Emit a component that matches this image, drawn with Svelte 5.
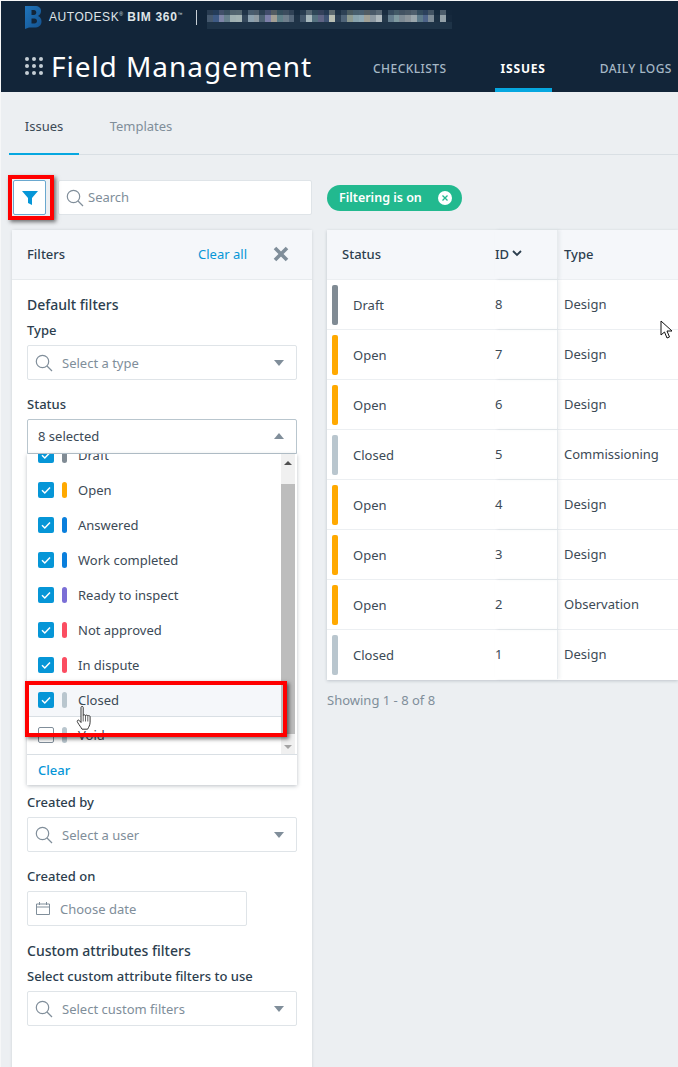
<script>
  // mosaic colours for the blurred project name
  const mosaic = [
    '#46596e','#3e5a84','#7d84a6','#67808c','#9fb0b2','#a3b3b4','#33475b','#8ba0ae','#8f9ba3','#4c6172','#7c7fa8','#a39f95','#5f8088','#6f7f8c','#55677a','#1f3347','#44586c','#a7b8bd','#54717f','#5f6485',
    '#3e5272','#b9bfb4','#2c4055','#4f6478','#8d9a90','#88a3ad','#8fa9b4','#a1a196','#8d99a3','#aeb8be','#24384b','#647d8d','#7f9aa0','#7d8a94','#8b949b','#9aa6ac','#5d7a8a','#4d6388','#7d8b96','#1d3144','#93a0a8','#16293d'
  ];

  const statuses = [
    { label: 'Draft', color: '#808b94', checked: true },
    { label: 'Open', color: '#ffa900', checked: true },
    { label: 'Answered', color: '#0a7fdc', checked: true },
    { label: 'Work completed', color: '#0a7fdc', checked: true },
    { label: 'Ready to inspect', color: '#7b6fd6', checked: true },
    { label: 'Not approved', color: '#fb4d61', checked: true },
    { label: 'In dispute', color: '#fb4d61', checked: true },
    { label: 'Closed', color: '#b9c6ce', checked: true, hover: true },
    { label: 'Void', color: '#b9c6ce', checked: false }
  ];

  const rows = [
    { status: 'Draft', color: '#808b94', id: 8, type: 'Design' },
    { status: 'Open', color: '#ffa900', id: 7, type: 'Design' },
    { status: 'Open', color: '#ffa900', id: 6, type: 'Design' },
    { status: 'Closed', color: '#b9c6ce', id: 5, type: 'Commissioning' },
    { status: 'Open', color: '#ffa900', id: 4, type: 'Design' },
    { status: 'Open', color: '#ffa900', id: 3, type: 'Design' },
    { status: 'Open', color: '#ffa900', id: 2, type: 'Observation' },
    { status: 'Closed', color: '#b9c6ce', id: 1, type: 'Design' }
  ];
</script>

{#snippet searchIcon()}
  <svg class="search-icon" width="18" height="18" viewBox="0 0 18 18" fill="none" stroke="#808e9a" stroke-width="1.2">
    <circle cx="7.5" cy="7.5" r="6.2" />
    <path d="M12 12l5 5" />
  </svg>
{/snippet}

{#snippet selectBox(placeholder)}
  <div class="select">
    {@render searchIcon()}
    <span class="placeholder">{placeholder}</span>
    <span class="caret down"></span>
  </div>
{/snippet}

<div class="page">
  <header class="header">
    <div class="topbar">
      <svg class="logo" width="18" height="24" viewBox="0 0 18 24">
        <defs>
          <linearGradient id="bim" x1="0" y1="0" x2="1" y2="1">
            <stop offset="0" stop-color="#1f75bc" />
            <stop offset="1" stop-color="#14528f" />
          </linearGradient>
        </defs>
        <path fill="url(#bim)" fill-rule="evenodd" d="M1 1h10c4 0 6 2 6 5 0 2-1 4-3 5 2 1 3.500 2.500 3.500 5.500 0 4-3 6-7 6H5L1 24zM7.500 5v5h2.500c1.500 0 2.300-1 2.300-2.500S11.500 5 10 5zM7.500 13.500v5h3c1.500 0 2.500-1 2.500-2.500s-1-2.500-2.500-2.500z" />
      </svg>
      <span class="brand">AUTODESK<sup>®</sup> <b>BIM 360</b><sup>™</sup></span>
      <span class="divider"></span>
      <div class="mosaic">
        <div class="mosaic-row dim">
          {#each mosaic as c}<span style="background:{c}"></span>{/each}
        </div>
        <div class="mosaic-row">
          {#each mosaic as c}<span style="background:{c}"></span>{/each}
        </div>
        <div class="mosaic-bottom"></div>
      </div>
    </div>
    <div class="titlebar">
      <div class="apps">
        {#each Array(9) as _}<span></span>{/each}
      </div>
      <h1>Field Management</h1>
      <nav>
        <a href="#checklists">CHECKLISTS</a>
        <a href="#issues" class="active">ISSUES</a>
        <a href="#logs">DAILY LOGS</a>
      </nav>
    </div>
  </header>

  <div class="subtabs">
    <a href="#issues" class="active">Issues</a>
    <a href="#templates">Templates</a>
  </div>

  <div class="toolbar">
    <button class="filter-btn" aria-label="Filter">
      <svg width="16" height="14" viewBox="0 0 16 14"><path fill="#0696d7" d="M0 0h16L10 7v7L6 12V7z" /></svg>
    </button>
    <div class="search">
      {@render searchIcon()}
      <span class="placeholder">Search</span>
    </div>
    <div class="pill">
      Filtering is on
      <svg width="14" height="14" viewBox="0 0 14 14">
        <circle cx="7" cy="7" r="7" fill="#fff" />
        <path d="M4.500 4.500l5 5M9.500 4.500l-5 5" stroke="#22b98f" stroke-width="1.300" />
      </svg>
    </div>
  </div>

  <div class="content">
    <aside class="filters">
      <div class="filters-head">
        <span class="strong">Filters</span>
        <a href="#clear" class="clear-all">Clear all</a>
        <svg width="16" height="16" viewBox="0 0 16 16"><path d="M2 2l12 12M14 2L2 14" stroke="#808e9a" stroke-width="3.600" /></svg>
      </div>
      <div class="filters-body">
        <h3>Default filters</h3>
        <div class="label">Type</div>
        {@render selectBox('Select a type')}

        <div class="label gap">Status</div>
        <div class="select open">
          <span class="value">8 selected</span>
          <span class="caret up"></span>
        </div>
        <div class="dropdown">
          <div class="list">
            <div class="items">
              {#each statuses as s}
                <div class="item" class:hover={s.hover}>
                  <span class="check" class:on={s.checked}>
                    {#if s.checked}
                      <svg width="16" height="16" viewBox="0 0 16 16" fill="none"><path d="M4 8.300l2.800 2.700L12 5.500" stroke="#fff" stroke-width="1.500" /></svg>
                    {/if}
                  </span>
                  <span class="tick" style="background:{s.color}"></span>
                  <span>{s.label}</span>
                </div>
              {/each}
            </div>
            <div class="scrollbar">
              <span class="arrow up"></span>
              <span class="thumb"></span>
              <span class="arrow down"></span>
            </div>
          </div>
          <div class="list-foot"><a href="#clear">Clear</a></div>
        </div>

        <div class="label">Created by</div>
        {@render selectBox('Select a user')}

        <div class="label gap">Created on</div>
        <div class="select date">
          <svg width="14" height="13" viewBox="0 0 14 13" fill="none" stroke="#808e9a">
            <path d="M.5 2h13v10.500H.5zM.5 5h13M3.500 0v3M10.500 0v3" />
          </svg>
          <span class="placeholder">Choose date</span>
        </div>

        <h3 class="custom">Custom attributes filters</h3>
        <div class="label">Select custom attribute filters to use</div>
        {@render selectBox('Select custom filters')}
      </div>
    </aside>

    <section class="results">
      <div class="table">
        <div class="tr th">
          <div class="c-status strong">Status</div>
          <div class="c-id strong">ID
            <svg width="10" height="7" viewBox="0 0 10 7" fill="none"><path d="M1 1l4 4 4-4" stroke="#2c3e4e" stroke-width="1.800" /></svg>
          </div>
          <div class="c-type strong">Type</div>
        </div>
        {#each rows as r}
          <div class="tr">
            <div class="c-status">
              <span class="bar" style="background:{r.color}"></span>
              <span class="status-name">{r.status}</span>
            </div>
            <div class="c-id">{r.id}</div>
            <div class="c-type">{r.type}</div>
          </div>
        {/each}
      </div>
      <p class="count">Showing 1 - 8 of 8</p>
    </section>
  </div>

  <!-- annotations drawn over the screenshot -->
  <div class="callout one"></div>
  <div class="callout two"></div>

  <svg class="cursor hand" width="18" height="24" viewBox="1 .5 14 24" fill="#fff" stroke="#222" stroke-width=".9">
    <path d="M5 2c0-1.500 2.200-1.500 2.200 0v8c0-1 2.300-1 2.300.3 0-1 2.300-1 2.300.4 0-.9 2.300-.9 2.300.5v5.500c0 3-1.500 5-2.500 7H6c-1-2-2.500-3.500-4.500-7-1-1.600 1-3 2-1.500L5 17z" />
    <path d="M7.200 10v6M9.500 10.500v5.500M11.800 11v5" fill="none" stroke-width=".7" />
  </svg>
  <svg class="cursor arrow-cursor" width="13" height="20" viewBox="0 0 13 20" fill="#fff" stroke="#111" stroke-width="1">
    <path d="M1 1v14l3.500-3 2.500 6 2.500-1-2.500-6H12z" />
  </svg>
</div>

<style>
  :global(body) {
    margin: 0;
    font-family: "Noto Sans", sans-serif;
  }

  a { text-decoration: none; color: inherit; }

  .page {
    position: relative;
    box-sizing: border-box;
    width: 678px;
    height: 1067px;
    overflow: hidden;
    border-top: 1px solid #f6f7f8;
    border-left: 1px solid #f6f7f8;
    background: #eceff2;
    color: #3c4a56;
    font-size: 13px;
  }

  /* ── header ── */
  .header {
    height: 91px;
    background: #122539;
    color: #fff;
  }

  .topbar {
    display: flex;
    align-items: center;
    height: 32px;
    padding-left: 23px;
  }

  .logo { flex-shrink: 0; margin-right: 7px; }

  .brand {
    width: 132px;
    flex-shrink: 0;
    font-family: "Liberation Sans", sans-serif;
    font-size: 12px;
    letter-spacing: 0.55px;
    color: #dfe4e8;
    white-space: nowrap;
  }

  .brand b { letter-spacing: 0.7px; }
  .brand sup { font-size: 5px; vertical-align: 5px; line-height: 0; }

  .divider {
    width: 1px;
    height: 15px;
    margin: 0 10px 0 15px;
    background: #c8d0d6;
    flex-shrink: 0;
  }

  .mosaic {
    display: flex;
    flex-direction: column;
    width: 245px;
    margin-top: 4px;
    flex-shrink: 0;
  }

  .mosaic-row { display: flex; height: 7px; }
  .mosaic-row.dim { height: 5px; opacity: 0.45; }
  .mosaic-row span { flex: 1; }
  .mosaic-bottom { height: 7px; background: #1e3347; }

  .titlebar {
    display: flex;
    align-items: center;
    height: 59px;
    padding-left: 24px;
  }

  .apps {
    display: grid;
    grid-template-columns: repeat(3, 4px);
    gap: 3px;
    margin-right: 8px;
    margin-top: 6px;
  }

  .apps span {
    width: 4px;
    height: 4px;
    border-radius: 50%;
    background: #c5ced5;
  }

  h1 {
    margin: 7px 0 0;
    width: 316px;
    flex-shrink: 0;
    font-size: 28px;
    font-weight: 400;
    letter-spacing: 0.95px;
    white-space: nowrap;
  }

  nav {
    display: flex;
    height: 100%;
    gap: 42px;
    font-size: 12px;
    font-weight: 500;
    letter-spacing: 0.45px;
    white-space: nowrap;
  }

  nav a {
    display: flex;
    align-items: center;
    box-sizing: border-box;
    height: 100%;
    padding: 16px 6px 0;
    color: #a6b8c6;
    border-bottom: 4px solid transparent;
  }

  nav a.active {
    color: #fff;
    font-weight: 700;
    letter-spacing: 0.8px;
    border-bottom-color: #06a7e0;
  }

  /* ── sub tabs ── */
  .subtabs {
    display: flex;
    box-sizing: border-box;
    height: 63px;
    margin-left: 8px;
    border-bottom: 1px solid #d9dfe4;
    gap: 1px;
  }

  .subtabs a {
    display: flex;
    align-items: center;
    justify-content: center;
    box-sizing: border-box;
    width: 70px;
    height: 63px;
    padding-top: 6px;
    margin-right: 26px;
    color: #808e9a;
    border-bottom: 2px solid transparent;
  }

  .subtabs a.active {
    color: #3c4a56;
    border-bottom-color: #06a7e0;
  }

  /* ── toolbar ── */
  .toolbar {
    display: flex;
    align-items: center;
    height: 35px;
    margin-top: 25px;
    padding-left: 12px;
  }

  .filter-btn {
    display: flex;
    align-items: center;
    justify-content: center;
    box-sizing: border-box;
    width: 33px;
    height: 35px;
    margin-right: 12px;
    padding: 0;
    background: #fff;
    border: 1px solid #6aa8cf;
    border-radius: 2px;
  }

  .search {
    display: flex;
    align-items: center;
    box-sizing: border-box;
    width: 254px;
    height: 35px;
    padding-left: 7px;
    background: #fff;
    border: 1px solid #dfe4e8;
    border-radius: 2px;
  }

  .search .placeholder { margin: -1px 0 0 4px; }

  .search-icon { flex-shrink: 0; }

  .placeholder { color: #808e9a; }

  .pill {
    display: flex;
    align-items: center;
    justify-content: space-between;
    box-sizing: border-box;
    width: 135px;
    height: 26px;
    margin-left: 15px;
    padding: 0 10px 0 12px;
    border-radius: 13px;
    background: #22b98f;
    color: #fff;
    font-size: 12.500px;
    font-weight: 600;
    white-space: nowrap;
  }

  /* ── content ── */
  .content {
    display: flex;
    align-items: flex-start;
    margin-top: 15px;
    padding-left: 11px;
  }

  .strong { color: #2c3e4e; font-weight: 500; }

  .filters {
    box-sizing: border-box;
    width: 300px;
    height: 840px;
    flex-shrink: 0;
    background: #fff;
    border-radius: 3px 3px 0 0;
    box-shadow: 0 0 3px rgba(60, 75, 90, 0.18);
  }

  .filters-head {
    display: flex;
    align-items: center;
    box-sizing: border-box;
    height: 50px;
    padding: 0 23px 2px 15px;
    background: #f5f7fa;
    border-bottom: 1px solid #e7ebee;
  }

  .clear-all {
    margin-left: auto;
    margin-right: 26px;
    color: #0696d7;
  }

  .filters-body { padding: 14px 15px 0; }

  h3 {
    margin: 0;
    color: #2c3e4e;
    font-size: 14px;
    font-weight: 500;
    line-height: 22px;
  }

  .custom { margin-top: 14px; }

  .label {
    margin: 5px 0 6px;
    height: 18px;
    line-height: 18px;
    color: #2c3e4e;
    font-weight: 500;
  }

  .label.gap { margin-top: 15px; }

  .select {
    display: flex;
    align-items: center;
    box-sizing: border-box;
    height: 35px;
    padding: 0 12px 0 7px;
    background: #fff;
    border: 1px solid #dfe4e8;
    border-radius: 2px;
  }

  .select .placeholder { margin-left: 9px; }

  .select.open {
    padding: 0 12px 2px 10px;
    border-color: #b9c6ce;
    border-radius: 2px 2px 0 0;
  }

  .select.date { width: 220px; padding-left: 8px; }
  .select.date .placeholder { margin-left: 10px; }

  .caret {
    margin-left: auto;
    width: 0;
    height: 0;
    border-left: 5px solid transparent;
    border-right: 5px solid transparent;
  }

  .caret.down { border-top: 6px solid #808e9a; }
  .caret.up { border-bottom: 6px solid #808e9a; }

  /* ── status dropdown ── */
  .dropdown {
    position: relative;
    margin-bottom: 8px;
    background: #fff;
    box-shadow: 0 1px 4px rgba(60, 75, 90, 0.35);
  }

  .list {
    position: relative;
    height: 300px;
    overflow: hidden;
    border-bottom: 1px solid #d9dfe4;
  }

  .items { margin-top: -17px; margin-right: 16px; }

  .item {
    display: flex;
    align-items: center;
    box-sizing: border-box;
    height: 35px;
    padding-left: 11px;
    color: #3c4a56;
  }

  .item.hover {
    padding-top: 1px;
    background: #f5f7fa;
    border-bottom: 1px solid #d9dfe4;
  }

  .check {
    display: flex;
    box-sizing: border-box;
    width: 16px;
    height: 16px;
    border: 1px solid #808e9a;
    border-radius: 2px;
    margin-right: 8px;
  }

  .check.on { background: #0696d7; border: 0; }

  .tick {
    width: 5px;
    height: 16px;
    margin-right: 11px;
    border-radius: 2.500px;
  }

  .scrollbar {
    position: absolute;
    top: 0;
    right: 2px;
    bottom: 0;
    display: flex;
    flex-direction: column;
    width: 14px;
    background: #f0f0f0;
  }

  .arrow {
    height: 30px;
    flex-shrink: 0;
    position: relative;
  }

  .arrow::after {
    content: '';
    position: absolute;
    left: 3px;
    width: 0;
    height: 0;
    border-left: 4px solid transparent;
    border-right: 4px solid transparent;
  }

  .arrow.up::after { top: 7px; border-bottom: 4px solid #505050; }
  .arrow.down { height: 16px; }
  .arrow.down::after { bottom: 5px; border-top: 4px solid #a3a3a3; }

  .thumb { flex: 1; background: #bdbdbd; margin-bottom: 4px; }

  .list-foot {
    height: 30px;
    line-height: 30px;
    padding-left: 11px;
    font-weight: 500;
    color: #0696d7;
  }

  /* ── table ── */
  .results { margin-left: 15px; flex: 1; min-width: 0; }

  .table {
    background: #fff;
    box-shadow: 0 1px 3px rgba(60, 75, 90, 0.25);
  }

  .tr {
    display: flex;
    align-items: stretch;
    box-sizing: border-box;
    height: 50px;
    border-bottom: 1px solid #eceff2;
  }

  .tr.th { background: #f5f7fa; }
  .tr:last-child { border-bottom-color: transparent; }

  .tr > div { display: flex; align-items: center; }

  .c-status { width: 163px; padding-left: 5px; flex-shrink: 0; }
  .th .c-status { padding-left: 15px; width: 153px; padding-bottom: 2px; }

  .bar {
    width: 6px;
    height: 40px;
    border-radius: 2px;
    margin-right: 15px;
  }

  .status-name { padding-top: 1px; }

  .c-id {
    box-sizing: border-box;
    width: 63px;
    gap: 3px;
    padding-bottom: 2px;
    border-right: 1px solid #e7ebee;
    box-shadow: 2px 0 3px rgba(60, 75, 90, 0.08);
    align-self: stretch;
  }

  .c-type { padding: 0 0 2px 6px; white-space: nowrap; }

  .count { margin: 11px 0 0; color: #808e9a; }

  /* ── annotations ── */
  .callout {
    position: absolute;
    box-sizing: border-box;
    border: 4px solid #ff0000;
    box-shadow: 2px 2px 4px rgba(0, 0, 0, 0.55);
  }

  .callout.one { left: 7px; top: 174px; width: 46px; height: 45px; }
  .callout.two { left: 24px; top: 680px; width: 262px; height: 56px; }

  .cursor { position: absolute; }
  .hand { left: 74px; top: 705px; }
  .arrow-cursor { left: 659px; top: 319px; }
</style>
